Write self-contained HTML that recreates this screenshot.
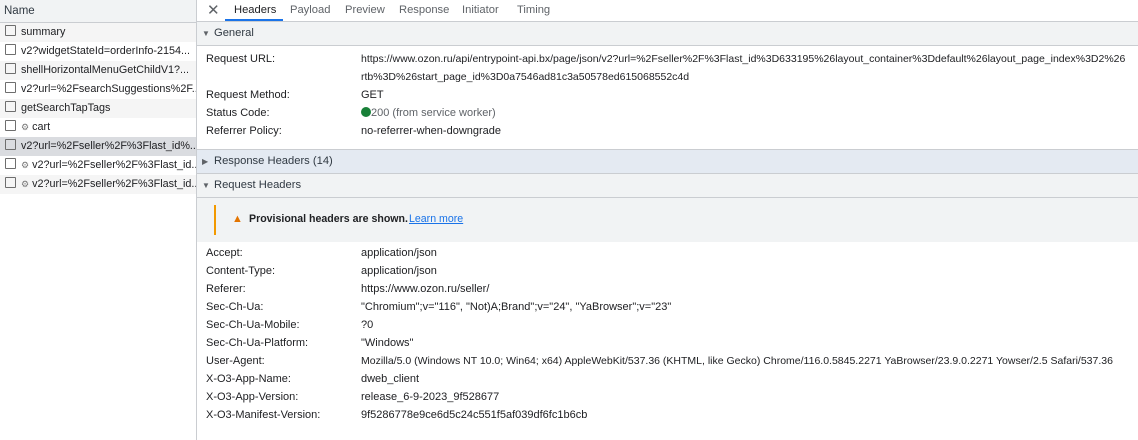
<!DOCTYPE html><html><head><style>
body{margin:0;width:1138px;height:440px;overflow:hidden;font-family:"Liberation Sans",sans-serif;font-size:11px;color:#202124;background:#fff;position:relative}
.l{position:absolute;left:0;top:0;width:196px;height:440px;border-right:1px solid #cacdd1;background:#fff;overflow:hidden}
.nh{height:22px;line-height:22px;padding-left:4px;background:#f1f3f4;border-bottom:1px solid #cacdd1;color:#303942;font-size:11.5px}
.r{height:19px;line-height:19px;white-space:nowrap;overflow:hidden;font-size:10.8px;padding-left:5px}
.g{background:#f5f5f5}.s{background:#dadce0}
.cb{display:inline-block;width:9px;height:9px;border:1px solid #6e6e6e;border-radius:1px;vertical-align:-1px;margin-right:5px}
.gear{color:#777;font-size:9px;margin-right:3px}
.p{position:absolute;left:197px;top:0;right:0;height:440px;overflow:hidden}
.tabs{height:21px;border-bottom:1px solid #cacdd1;position:relative;color:#5f6368;font-size:11.2px}
.tabs span{position:absolute;top:4px}
.ul{position:absolute;left:28px;top:19px;width:58px;height:2px;background:#1a73e8}
.sec{height:23px;line-height:23px;background:#f1f3f4;border-bottom:1px solid #cacdd1;padding-left:5px;color:#303942;font-size:11.2px}
.tri{font-size:8px;color:#5f6368;margin-right:5px;display:inline-block;width:7px}
.kv{position:relative;height:18px;line-height:18px;white-space:nowrap}
.k{position:absolute;left:9px}.v{position:absolute;left:164px}
</style></head><body>
<div class="l">
<div class="nh">Name</div>
<div class="r g"><span class="cb"></span>summary</div>
<div class="r"><span class="cb"></span>v2?widgetStateId=orderInfo-2154...</div>
<div class="r g"><span class="cb"></span>shellHorizontalMenuGetChildV1?...</div>
<div class="r"><span class="cb"></span>v2?url=%2FsearchSuggestions%2F...</div>
<div class="r g"><span class="cb"></span>getSearchTapTags</div>
<div class="r"><span class="cb"></span><span class="gear">⚙</span>cart</div>
<div class="r s"><span class="cb"></span>v2?url=%2Fseller%2F%3Flast_id%...</div>
<div class="r"><span class="cb"></span><span class="gear">⚙</span>v2?url=%2Fseller%2F%3Flast_id...</div>
<div class="r g"><span class="cb"></span><span class="gear">⚙</span>v2?url=%2Fseller%2F%3Flast_id...</div>
</div>
<div class="p">
<div class="tabs"><span style="left:10px;top:1px;font-size:15px">✕</span><span style="left:37px;color:#202124">Headers</span><span style="left:93px">Payload</span><span style="left:148px">Preview</span><span style="left:202px">Response</span><span style="left:265px">Initiator</span><span style="left:320px">Timing</span><div class="ul"></div></div>
<div class="sec"><span class="tri">▼</span>General</div>
<div style="height:99px;padding-top:4px">
<div class="kv" style="height:36px"><span class="k">Request URL:</span><span class="v" style="font-size:10.5px">https://www.ozon.ru/api/entrypoint-api.bx/page/json/v2?url=%2Fseller%2F%3Flast_id%3D633195%26layout_container%3Ddefault%26layout_page_index%3D2%26<br>rtb%3D%26start_page_id%3D0a7546ad81c3a50578ed615068552c4d</span></div>
<div class="kv"><span class="k">Request Method:</span><span class="v">GET</span></div>
<div class="kv"><span class="k">Status Code:</span><span class="v"><span style="display:inline-block;width:10px;height:10px;border-radius:50%;background:#188038;vertical-align:-1px"></span><span style="color:#5f6368">200 (from service worker)</span></span></div>
<div class="kv"><span class="k">Referrer Policy:</span><span class="v">no-referrer-when-downgrade</span></div>
</div>
<div class="sec" style="background:#e4eaf2;border-top:1px solid #cacdd1;height:23px;line-height:23px"><span class="tri">▶</span>Response Headers (14)</div>
<div class="sec"><span class="tri">▼</span>Request Headers</div>
<div style="height:44px;background:#f1f3f4;position:relative"><div style="position:absolute;left:17px;top:7px;width:2px;height:30px;background:#f29900"></div><span style="position:absolute;left:35px;top:15px;color:#e37400;font-size:11px">▲</span><span style="position:absolute;left:52px;top:15px;font-weight:bold;font-size:10.6px">Provisional headers are shown.</span><span style="position:absolute;left:212px;top:15px;color:#1a73e8;text-decoration:underline;font-size:10.6px">Learn more</span></div>
<div style="padding-top:2px">
<div class="kv"><span class="k">Accept:</span><span class="v">application/json</span></div>
<div class="kv"><span class="k">Content-Type:</span><span class="v">application/json</span></div>
<div class="kv"><span class="k">Referer:</span><span class="v">https://www.ozon.ru/seller/</span></div>
<div class="kv"><span class="k">Sec-Ch-Ua:</span><span class="v">"Chromium";v="116", "Not)A;Brand";v="24", "YaBrowser";v="23"</span></div>
<div class="kv"><span class="k">Sec-Ch-Ua-Mobile:</span><span class="v">?0</span></div>
<div class="kv"><span class="k">Sec-Ch-Ua-Platform:</span><span class="v">"Windows"</span></div>
<div class="kv"><span class="k">User-Agent:</span><span class="v" style="font-size:10.5px">Mozilla/5.0 (Windows NT 10.0; Win64; x64) AppleWebKit/537.36 (KHTML, like Gecko) Chrome/116.0.5845.2271 YaBrowser/23.9.0.2271 Yowser/2.5 Safari/537.36</span></div>
<div class="kv"><span class="k">X-O3-App-Name:</span><span class="v">dweb_client</span></div>
<div class="kv"><span class="k">X-O3-App-Version:</span><span class="v">release_6-9-2023_9f528677</span></div>
<div class="kv"><span class="k">X-O3-Manifest-Version:</span><span class="v">9f5286778e9ce6d5c24c551f5af039df6fc1b6cb</span></div>
</div>
</div>
</body></html>
